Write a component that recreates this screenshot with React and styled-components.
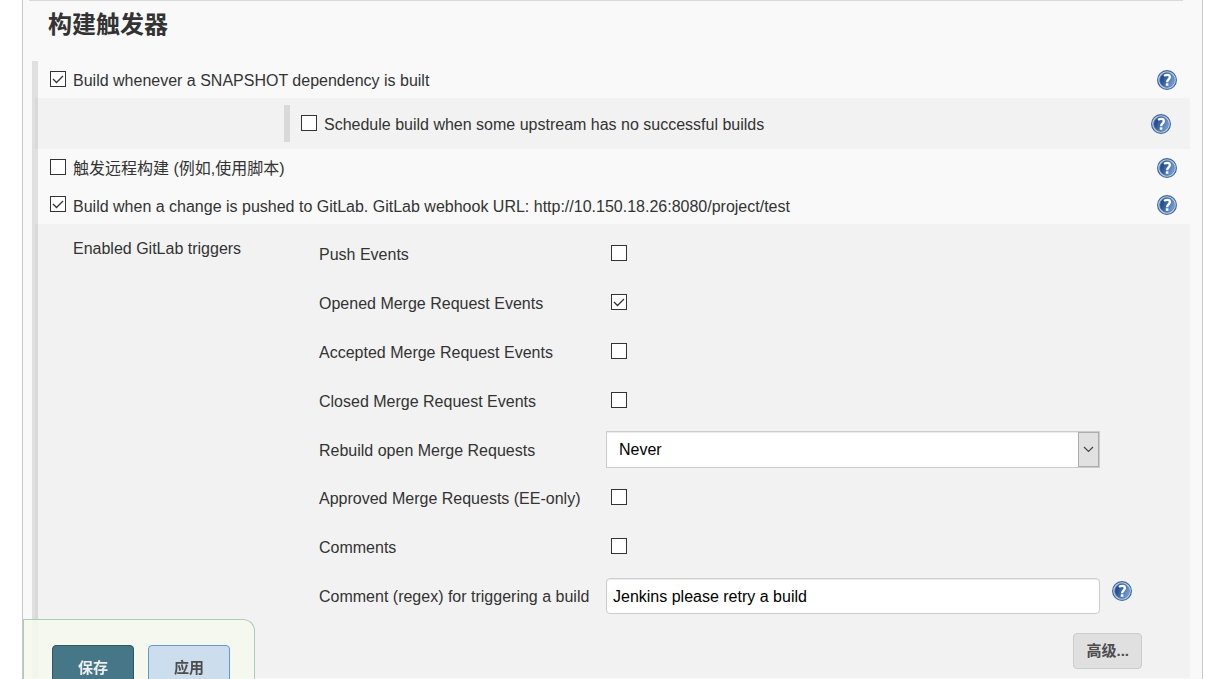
import React, { useState } from 'react';
import styled, { createGlobalStyle } from 'styled-components';

const GlobalStyle = createGlobalStyle`
  * {
    box-sizing: border-box;
  }

  body {
    margin: 0;
    background: #fff;
    color: #333;
    font-family: 'Liberation Sans', 'Noto Sans CJK SC', sans-serif;
    font-size: 16px;
    line-height: 20px;
  }
`;

const Panel = styled.main`
  min-height: 100vh;
  margin: 0 4px 0 22px;
  padding: 0 12px 0 9px;
  border: solid #c8c8c8;
  border-width: 0 1px;
  background: #f9f9f9;
`;

const SectionHeader = styled.header`
  margin: 0 7px 0 -3px;
  padding: 5px 0 18px 19px;
  border-top: 1px solid #d9d9d9;
`;

const Title = styled.h2`
  margin: 0;
  font-size: 24px;
  line-height: 37px;
`;

const Triggers = styled.section`
  border-left: 6px solid #e0e0e0;
`;

const TriggerRow = styled.div`
  display: flex;
  align-items: center;
  justify-content: space-between;
  height: ${({ $tall }) => ($tall ? '38px' : '37px')};
  padding: 0 13px 0 12px;
`;

const Shaded = styled.div`
  margin-left: -3px;
  background: rgba(0, 0, 0, 0.027);
`;

const NestedArea = styled(Shaded)`
  padding: 7px 6px 7px 249px;
`;

const NestedRow = styled(TriggerRow)`
  padding-left: 11px;
  border-left: 6px solid #d9d9d9;
`;

const TriggerLabel = styled.label`
  display: flex;
  align-items: center;
  gap: 7px;
  padding-bottom: 2px;

  & > span:last-child {
    padding-top: 5px;
  }
`;

const CheckWrap = styled.span`
  position: relative;
  display: block;
  flex: none;
  width: 16px;
  height: 16px;
`;

const CheckInput = styled.input`
  display: block;
  width: 16px;
  height: 16px;
  margin: 0;
  appearance: none;
  border: 1px solid #333;
  background: #fff;
`;

const CheckMark = styled.svg`
  position: absolute;
  inset: 0;
  pointer-events: none;
`;

const HelpLink = styled.a`
  display: block;
  flex: none;
  width: 20px;
  height: 20px;

  svg {
    display: block;
  }
`;

const GitlabArea = styled(Shaded)`
  display: grid;
  grid-template-columns: 246px 1fr;
  padding: 5px 48px 9px 38px;
`;

const AreaLabel = styled.div`
  padding-top: 10px;
`;

const Settings = styled.div`
  min-width: 0;
`;

const SettingRow = styled.div`
  display: grid;
  grid-template-columns: 287px 1fr 20px;
  align-items: center;
  height: ${({ $short }) => ($short ? '48px' : '49px')};
  margin-right: 10px;
`;

const SettingLabel = styled.label`
  padding-top: 3px;
`;

const CheckCell = styled.div`
  padding: 0 0 2px 5px;
`;

const SelectWrap = styled.div`
  position: relative;
  margin-right: 12px;
`;

const Select = styled.select`
  display: block;
  width: 100%;
  height: 37px;
  padding: 2px 30px 0 12px;
  appearance: none;
  border: 1px solid #ccc;
  border-radius: 0;
  background: #fff;
  box-shadow: inset 0 1px 1px rgba(0, 0, 0, 0.08);
  color: #000;
  font: inherit;
`;

const SelectArrow = styled.span`
  position: absolute;
  top: 1px;
  right: 1px;
  bottom: 1px;
  display: flex;
  align-items: center;
  justify-content: center;
  width: 21px;
  border: 1px solid #adadad;
  background: #e1e1e1;
  pointer-events: none;
`;

const TextInput = styled.input`
  width: calc(100% - 12px);
  height: 36px;
  padding: 2px 6px 0;
  border: 1px solid #ccc;
  border-radius: 4px;
  background: #fff;
  box-shadow: inset 0 1px 1px rgba(0, 0, 0, 0.08);
  color: #000;
  font: inherit;
`;

const HelpCell = styled.div`
  padding-bottom: 10px;
`;

const Actions = styled.div`
  display: flex;
  justify-content: flex-end;
  padding-top: 13px;
`;

const Button = styled.button`
  height: 36px;
  padding: 0 12px 3px;
  border: 1px solid #ccc;
  border-radius: 4px;
  background: #e0e0e0;
  color: #4d4d4d;
  font-family: inherit;
  font-size: 15px;
  font-weight: bold;
`;

const SaveBar = styled.div`
  position: fixed;
  bottom: 0;
  left: 23px;
  display: flex;
  align-items: flex-start;
  gap: 14px;
  height: 60px;
  padding: 25px 24px 0 28px;
  overflow: hidden;
  border: 1px solid #a8cdb8;
  border-bottom: 0;
  border-top-right-radius: 12px;
  background: rgba(245, 249, 239, 0.85);
`;

const BarButton = styled(Button)`
  width: 82px;
  height: 46px;
  border-color: ${({ $primary }) => ($primary ? '#2f5763' : '#6399cf')};
  background: ${({ $primary }) => ($primary ? '#457788' : '#ccdded')};
  color: ${({ $primary }) => ($primary ? '#eee' : '#4d4d4d')};
`;

const Checkbox = ({ id, defaultChecked = false }) => {
  const [checked, setChecked] = useState(defaultChecked);

  return (
    <CheckWrap>
      <CheckInput
        id={id}
        type="checkbox"
        checked={checked}
        onChange={(e) => setChecked(e.target.checked)}
      />
      {checked && (
        <CheckMark width="16" height="16" viewBox="0 0 16 16" fill="none">
          <path d="M3 8L6.5 11.5L13 5" stroke="#333" strokeWidth="1.3" />
        </CheckMark>
      )}
    </CheckWrap>
  );
};

const Help = ({ topic }) => (
  <HelpLink href="#help" aria-label={`Help: ${topic}`}>
    <svg width="20" height="20" viewBox="0 0 20 20" fill="none">
      <defs>
        <linearGradient id="helpFill" x1="0" y1="0.3" x2="1" y2="0.7">
          <stop offset="0.2" stopColor="#24508f" />
          <stop offset="1" stopColor="#7ba3d6" />
        </linearGradient>
      </defs>
      <circle cx="10" cy="10" r="9.4" fill="#c3d2e6" stroke="#4169a0" strokeWidth="1.2" />
      <circle cx="10" cy="10" r="7.4" fill="url(#helpFill)" stroke="#6286b8" strokeWidth="0.8" />
      <path
        d="M7 5.9C8 5.2 9.2 4.9 10.4 4.9C12 4.9 12.9 5.8 12.9 7.1C12.9 9.3 10.1 9.4 10.1 12.2"
        stroke="#fff"
        strokeWidth="2.3"
      />
      <rect x="8.8" y="13.3" width="2.6" height="2.5" fill="#fff" />
    </svg>
  </HelpLink>
);

const Trigger = ({ id, label, checked, tall, as: Row = TriggerRow }) => (
  <Row $tall={tall}>
    <TriggerLabel htmlFor={id}>
      <Checkbox id={id} defaultChecked={checked} />
      <span>{label}</span>
    </TriggerLabel>
    <Help topic={label} />
  </Row>
);

const CheckSetting = ({ id, label, checked }) => (
  <SettingRow>
    <SettingLabel htmlFor={id}>{label}</SettingLabel>
    <CheckCell>
      <Checkbox id={id} defaultChecked={checked} />
    </CheckCell>
  </SettingRow>
);

const App = () => {
  const [rebuild, setRebuild] = useState('never');
  const [comment, setComment] = useState('Jenkins please retry a build');

  return (
    <>
      <GlobalStyle />
      <Panel>
        <SectionHeader>
          <Title>构建触发器</Title>
        </SectionHeader>

        <Triggers>
          <Trigger id="snapshot" label="Build whenever a SNAPSHOT dependency is built" checked />
          <NestedArea>
            <Trigger
              id="upstream"
              label="Schedule build when some upstream has no successful builds"
              as={NestedRow}
            />
          </NestedArea>
          <Trigger id="remote" label="触发远程构建 (例如,使用脚本)" />
          <Trigger
            id="gitlab"
            label="Build when a change is pushed to GitLab. GitLab webhook URL: http://10.150.18.26:8080/project/test"
            checked
            tall
          />

          <GitlabArea>
            <AreaLabel>Enabled GitLab triggers</AreaLabel>
            <Settings>
              <CheckSetting id="push" label="Push Events" />
              <CheckSetting id="opened" label="Opened Merge Request Events" checked />
              <CheckSetting id="accepted" label="Accepted Merge Request Events" />
              <CheckSetting id="closed" label="Closed Merge Request Events" />
              <SettingRow $short>
                <SettingLabel htmlFor="rebuild">Rebuild open Merge Requests</SettingLabel>
                <SelectWrap>
                  <Select id="rebuild" value={rebuild} onChange={(e) => setRebuild(e.target.value)}>
                    <option value="never">Never</option>
                    <option value="source">On push to source branch</option>
                    <option value="both">On push to source or target branch</option>
                  </Select>
                  <SelectArrow>
                    <svg width="11" height="7" viewBox="0 0 11 7" fill="none">
                      <path d="M1 1L5.5 5.5L10 1" stroke="#444" strokeWidth="1.2" />
                    </svg>
                  </SelectArrow>
                </SelectWrap>
              </SettingRow>
              <CheckSetting id="approved" label="Approved Merge Requests (EE-only)" />
              <CheckSetting id="comments" label="Comments" />
              <SettingRow>
                <SettingLabel htmlFor="regex">Comment (regex) for triggering a build</SettingLabel>
                <TextInput
                  id="regex"
                  type="text"
                  value={comment}
                  onChange={(e) => setComment(e.target.value)}
                />
                <HelpCell>
                  <Help topic="Comment (regex)" />
                </HelpCell>
              </SettingRow>
              <Actions>
                <Button type="button">高级...</Button>
              </Actions>
            </Settings>
          </GitlabArea>
        </Triggers>
      </Panel>

      <SaveBar>
        <BarButton type="submit" $primary>
          保存
        </BarButton>
        <BarButton type="button">应用</BarButton>
      </SaveBar>
    </>
  );
};

export default App;
